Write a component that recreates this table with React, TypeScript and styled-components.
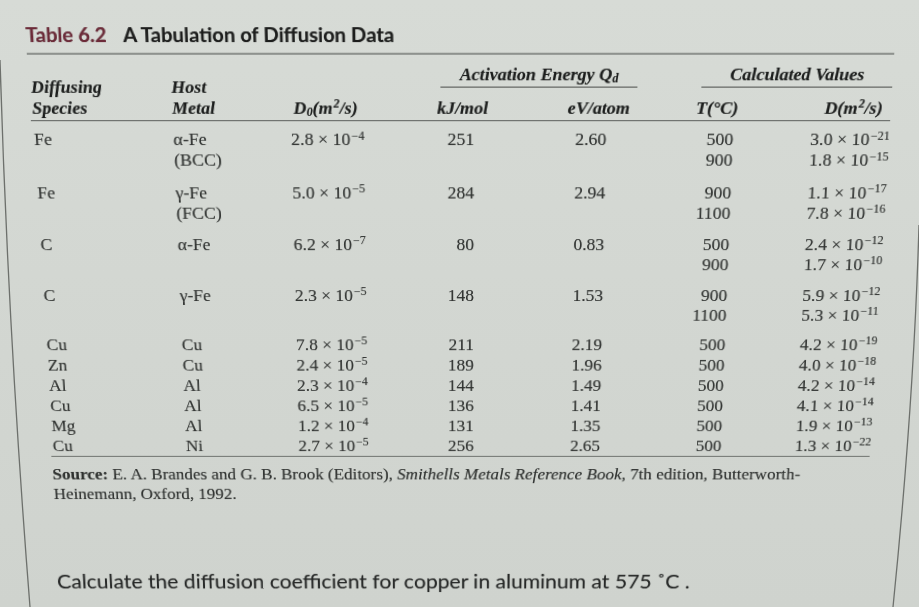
import React from "react";
import styled, { createGlobalStyle } from "styled-components";

const Global = createGlobalStyle`
  html, body {
    margin: 0;
    padding: 0;
    width: 919px;
    height: 607px;
    overflow: hidden;
    background: #d3d7d2;
  }
  #root { width: 919px; height: 607px; }
`;

const Screen = styled.div`
  position: relative;
  width: 919px;
  height: 607px;
  overflow: hidden;
  background: linear-gradient(180deg, #d7dbd6 0%, #d3d7d2 45%, #cfd3ce 100%);
`;

const Sheet = styled.div`
  width: 919px;
  box-sizing: border-box;
  padding: 30px 40px 0 42px;
  transform-origin: 460px 303px;
  transform: perspective(1000px) rotateX(-8.3deg);
  color: #313432;
  font-family: "Liberation Serif", "Times New Roman", serif;
  font-size: 17.5px;
  text-shadow: 0 0 0.6px rgba(30, 32, 31, 0.45);
`;

const Title = styled.div`
  font-family: Lato, "Open Sans", sans-serif;
  font-weight: 700;
  font-size: 19.5px;
  line-height: 24px;
  color: #1c1d1c;
  display: flex;
  gap: 16px;
`;

const TitleNum = styled.span`
  color: #6c2a38;
`;

const TopRule = styled.div`
  margin-top: 5px;
  width: 837px;
  height: 2px;
  background: #8e928e;
`;

const COLS = "136px 115px 129px 81px 184px 46px 146px";

const HeaderGrid = styled.div`
  margin-top: 8px;
  width: 837px;
  display: grid;
  grid-template-columns: ${COLS};
  grid-template-rows: auto auto;
  row-gap: 8.5px;
  padding-bottom: 2.4px;
  border-bottom: 1.5px solid #5f625f;
  font-weight: 700;
  font-style: italic;
  color: #1b1d1c;
  line-height: 20px;
`;

const StackHead = styled.div<{ $col: number }>`
  grid-column: ${(p) => p.$col};
  grid-row: 1 / span 2;
  align-self: end;
  padding-left: 2px;
`;

const GroupHead = styled.div<{ $col: number; $ml: number; $mr: number }>`
  grid-column: ${(p) => p.$col} / span 2;
  grid-row: 1;
  margin: 0 ${(p) => p.$mr}px 0 ${(p) => p.$ml}px;
  text-align: center;
  padding-bottom: 2px;
  border-bottom: 1.5px solid #4f524f;
`;

const SubHead = styled.div<{ $col: number; $align: string; $pad: string }>`
  grid-column: ${(p) => p.$col};
  grid-row: 2;
  text-align: ${(p) => p.$align};
  padding: ${(p) => p.$pad};
  white-space: nowrap;
`;

const Body = styled.div`
  width: 837px;
  padding-top: 7.6px;
  border-bottom: 1.5px solid #6a6d6a;
`;

const Row = styled.div<{ $gap: number; $lh: number }>`
  display: grid;
  grid-template-columns: ${COLS};
  margin-top: ${(p) => p.$gap}px;
  line-height: ${(p) => p.$lh}px;
`;

const Cell = styled.div<{ $align: string; $pad: string }>`
  text-align: ${(p) => p.$align};
  padding: ${(p) => p.$pad};
  white-space: nowrap;
`;

const Line = styled.div``;

const Sup = styled.sup`
  font-size: 0.68em;
  line-height: 0;
  vertical-align: 0.5em;
  margin-left: 1px;
`;

const Sub = styled.sub`
  font-size: 0.68em;
  line-height: 0;
  vertical-align: -0.15em;
`;

const Source = styled.p`
  margin: 8px 0 0 0;
  line-height: 21.4px;
  color: #2f3230;
`;

const Question = styled.p`
  margin: 72px 0 0 -2px;
  font-family: Lato, "Open Sans", sans-serif;
  font-size: 22px;
  line-height: 24px;
  color: #262827;
  text-shadow: 0 0 1px rgba(40, 40, 40, 0.4);
`;

const Bezel = styled.svg`
  position: absolute;
  left: 0;
  top: 0;
  pointer-events: none;
`;

const cellStyle: { align: string; pad: string }[] = [
  { align: "left", pad: "0 0 0 2px" },
  { align: "left", pad: "0 0 0 2px" },
  { align: "left", pad: "0 0 0 2px" },
  { align: "right", pad: "0 29px 0 0" },
  { align: "right", pad: "0 84px 0 0" },
  { align: "right", pad: "0 6px 0 0" },
  { align: "left", pad: "0 0 0 69px" },
];

const Sci = ({ m, e }: { m: string; e: string }) => (
  <>
    {m} × 10<Sup>−{e}</Sup>
  </>
);

type Group = {
  sp: string;
  host: string[];
  d0: [string, string];
  kj: string;
  ev: string;
  t: string[];
  d: [string, string][];
};

const groups: Group[] = [
  { sp: "Fe", host: ["α-Fe", "(BCC)"], d0: ["2.8", "4"], kj: "251", ev: "2.60", t: ["500", "900"], d: [["3.0", "21"], ["1.8", "15"]] },
  { sp: "Fe", host: ["γ-Fe", "(FCC)"], d0: ["5.0", "5"], kj: "284", ev: "2.94", t: ["900", "1100"], d: [["1.1", "17"], ["7.8", "16"]] },
  { sp: "C", host: ["α-Fe"], d0: ["6.2", "7"], kj: "80", ev: "0.83", t: ["500", "900"], d: [["2.4", "12"], ["1.7", "10"]] },
  { sp: "C", host: ["γ-Fe"], d0: ["2.3", "5"], kj: "148", ev: "1.53", t: ["900", "1100"], d: [["5.9", "12"], ["5.3", "11"]] },
  { sp: "Cu", host: ["Cu"], d0: ["7.8", "5"], kj: "211", ev: "2.19", t: ["500"], d: [["4.2", "19"]] },
  { sp: "Zn", host: ["Cu"], d0: ["2.4", "5"], kj: "189", ev: "1.96", t: ["500"], d: [["4.0", "18"]] },
  { sp: "Al", host: ["Al"], d0: ["2.3", "4"], kj: "144", ev: "1.49", t: ["500"], d: [["4.2", "14"]] },
  { sp: "Cu", host: ["Al"], d0: ["6.5", "5"], kj: "136", ev: "1.41", t: ["500"], d: [["4.1", "14"]] },
  { sp: "Mg", host: ["Al"], d0: ["1.2", "4"], kj: "131", ev: "1.35", t: ["500"], d: [["1.9", "13"]] },
  { sp: "Cu", host: ["Ni"], d0: ["2.7", "5"], kj: "256", ev: "2.65", t: ["500"], d: [["1.3", "22"]] },
];

function DataRow({ g, gap, lh }: { g: Group; gap: number; lh: number }) {
  const cols: React.ReactNode[][] = [
    [g.sp],
    g.host,
    [<Sci m={g.d0[0]} e={g.d0[1]} />],
    [g.kj],
    [g.ev],
    g.t,
    g.d.map(([m, e]) => <Sci m={m} e={e} />),
  ];
  return (
    <Row $gap={gap} $lh={lh}>
      {cols.map((lines, i) => (
        <Cell key={i} $align={cellStyle[i].align} $pad={cellStyle[i].pad}>
          {lines.map((l, j) => (
            <Line key={j}>{l}</Line>
          ))}
        </Cell>
      ))}
    </Row>
  );
}

export default function App() {
  return (
    <Screen>
      <Global />
      <Sheet>
        <Title>
          <TitleNum>Table 6.2</TitleNum>
          <span>A Tabulation of Diffusion Data</span>
        </Title>
        <TopRule />
        <HeaderGrid>
          <StackHead $col={1}>
            Diffusing
            <br />
            Species
          </StackHead>
          <StackHead $col={2}>
            Host
            <br />
            Metal
          </StackHead>
          <GroupHead $col={4} $ml={19} $mr={55}>
            Activation Energy Q<Sub>d</Sub>
          </GroupHead>
          <GroupHead $col={6} $ml={7} $mr={0}>
            Calculated Values
          </GroupHead>
          <SubHead $col={3} $align="left" $pad="0 0 0 5px">
            D<Sub>0</Sub>(m<Sup>2</Sup>/s)
          </SubHead>
          <SubHead $col={4} $align="center" $pad="0">
            kJ/mol
          </SubHead>
          <SubHead $col={5} $align="center" $pad="0">
            eV/atom
          </SubHead>
          <SubHead $col={6} $align="center" $pad="0">
            T(°C)
          </SubHead>
          <SubHead $col={7} $align="right" $pad="0 8px 0 0">
            D(m<Sup>2</Sup>/s)
          </SubHead>
        </HeaderGrid>
        <Body>
          {groups.map((g, i) => (
            <DataRow
              key={i}
              g={g}
              gap={i === 0 ? 0 : i < 4 ? 11.3 : i === 4 ? 9.3 : 0}
              lh={i < 4 ? 20 : 21}
            />
          ))}
        </Body>
        <Source>
          <b>Source:</b> E. A. Brandes and G. B. Brook (Editors), <i>Smithells Metals Reference Book</i>, 7th edition, Butterworth-
          <br />
          Heinemann, Oxford, 1992.
        </Source>
        <Question>Calculate the diffusion coefficient for copper in aluminum at 575 ˚C .</Question>
      </Sheet>
      <Bezel width="919" height="607" viewBox="0 0 919 607">
        <path d="M 0 60 Q 8 330 30 607" fill="none" stroke="#6d706c" strokeWidth="1.3" />
        <path d="M 919 225 Q 914 400 893 607" fill="none" stroke="#6d706c" strokeWidth="1.3" />
      </Bezel>
    </Screen>
  );
}
